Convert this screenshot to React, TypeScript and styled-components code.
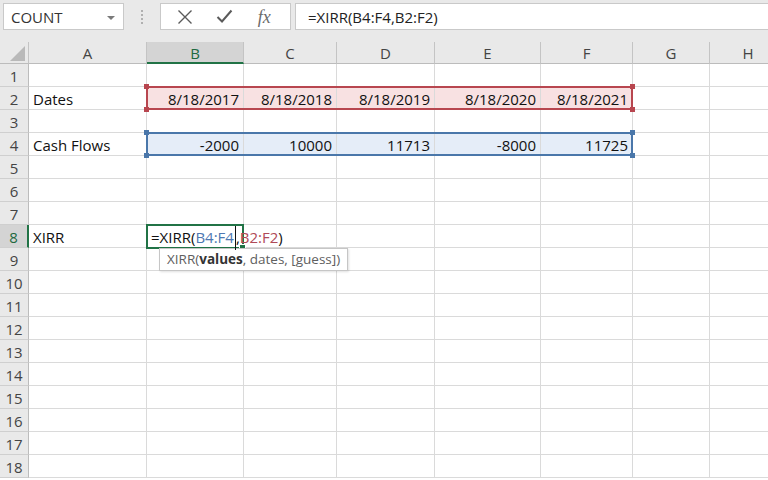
import React from 'react';
import styled, { createGlobalStyle, css } from 'styled-components';

const GlobalStyle = createGlobalStyle`
  html, body { margin: 0; padding: 0; background: #ffffff; }
  body { font-family: 'Open Sans', 'Noto Sans', sans-serif; overflow: hidden; }
`;

const GREEN = '#217346';
const RED = '#b8464f';
const BLUE = '#4a77aa';
const RED_FILL = '#f8e1e2';
const BLUE_FILL = '#e5edf8';

const Page = styled.div`
  width: 768px;
  height: 480px;
  overflow: hidden;
  background: #ffffff;
  display: flex;
  flex-direction: column;
`;

const Toolbar = styled.div`
  height: 42px;
  flex: none;
  background: #e9e9e9;
  display: flex;
  align-items: flex-start;
  padding: 3px 0 0 3px;
  box-sizing: border-box;
`;

const Box = styled.div`
  height: 27px;
  box-sizing: border-box;
  background: #ffffff;
  border: 1px solid #c9c9c9;
  display: flex;
  align-items: center;
`;

const NameBox = styled(Box)`
  width: 121px;
  justify-content: space-between;
  padding: 0 8px 0 7px;
  font-size: 15px;
  color: #333333;
`;

const DropArrow = styled.span`
  width: 0;
  height: 0;
  border-left: 4px solid transparent;
  border-right: 4px solid transparent;
  border-top: 4px solid #7a7a7a;
  margin-top: 2px;
`;

const Grip = styled.div`
  margin: 7px 17px 0 17px;
  display: flex;
  flex-direction: column;
  gap: 2px;
`;

const GripDot = styled.span`
  width: 2px;
  height: 2px;
  background: #b0b0b0;
`;

const ButtonsBox = styled(Box)`
  width: 131px;
  justify-content: space-around;
  padding: 0 6px 0 4px;
`;

const IconSlot = styled.span`
  width: 28px;
  display: flex;
  justify-content: center;
  align-items: center;
`;

const Fx = styled.span`
  font-family: 'Liberation Serif', 'DejaVu Serif', serif;
  font-style: italic;
  font-size: 18px;
  color: #6b6b6b;
  line-height: 1;
`;

const FormulaInput = styled(Box)`
  flex: 1;
  margin-left: 4px;
  padding: 1px 0 0 12px;
  font-size: 15px;
  color: #222222;
  border-right: none;
`;

const Sheet = styled.div`
  display: grid;
  grid-template-columns: 29px 118px 97px 93px 98px 106px 92px 77px 77px;
  grid-template-rows: 22px repeat(18, 23px);
  width: 787px;
`;

const ColHeader = styled.div<{ $selected?: boolean }>`
  box-sizing: border-box;
  background: ${(p) => (p.$selected ? '#d4d4d4' : '#e9e9e9')};
  border-right: 1px solid #c4c4c4;
  border-bottom: ${(p) => (p.$selected ? `2px solid ${GREEN}` : '1px solid #bcbcbc')};
  display: flex;
  align-items: center;
  justify-content: center;
  font-size: 15px;
  color: ${(p) => (p.$selected ? '#1f6a40' : '#444444')};
  padding-top: ${(p) => (p.$selected ? '1px' : '0')};
`;

const Corner = styled.div`
  box-sizing: border-box;
  background: #e9e9e9;
  border-right: 1px solid #c4c4c4;
  border-bottom: 1px solid #bcbcbc;
  display: flex;
  align-items: flex-end;
  justify-content: flex-end;
  padding: 0 3px 2px 0;
`;

const CornerTriangle = styled.span`
  width: 0;
  height: 0;
  border-left: 15px solid transparent;
  border-bottom: 15px solid #b9b9b9;
`;

const RowHeader = styled.div<{ $selected?: boolean }>`
  box-sizing: border-box;
  background: ${(p) => (p.$selected ? '#d4d4d4' : '#e9e9e9')};
  border-right: ${(p) => (p.$selected ? `2px solid ${GREEN}` : '1px solid #bcbcbc')};
  border-bottom: 1px solid #cfcfcf;
  display: flex;
  align-items: flex-end;
  justify-content: center;
  font-size: 15px;
  line-height: 19px;
  color: ${(p) => (p.$selected ? '#1f6a40' : '#444444')};
`;

type RangeColor = 'red' | 'blue';

const Cell = styled.div<{
  $right?: boolean;
  $range?: RangeColor;
  $first?: boolean;
  $last?: boolean;
}>`
  position: relative;
  box-sizing: border-box;
  border-right: 1px solid #dadada;
  border-bottom: 1px solid #dadada;
  display: flex;
  align-items: flex-end;
  justify-content: ${(p) => (p.$right ? 'flex-end' : 'flex-start')};
  padding: 0 4px;
  font-size: 15px;
  line-height: 19px;
  color: #111111;
  white-space: nowrap;
  background: ${(p) =>
    p.$range === 'red' ? RED_FILL : p.$range === 'blue' ? BLUE_FILL : 'transparent'};
  ${(p) =>
    p.$range &&
    css`
      &::before {
        content: '';
        position: absolute;
        top: -1px;
        bottom: -1px;
        left: ${p.$first ? '-1px' : '0'};
        right: -1px;
        border-top: 2px solid ${p.$range === 'red' ? RED : BLUE};
        border-bottom: 2px solid ${p.$range === 'red' ? RED : BLUE};
        border-left: ${p.$first ? `2px solid ${p.$range === 'red' ? RED : BLUE}` : 'none'};
        border-right: ${p.$last ? `2px solid ${p.$range === 'red' ? RED : BLUE}` : 'none'};
        pointer-events: none;
      }
    `}
`;

const Handle = styled.span<{ $color: string; $top?: boolean; $left?: boolean }>`
  position: absolute;
  width: 5px;
  height: 5px;
  background: ${(p) => p.$color};
  ${(p) => (p.$top ? 'top: -3px;' : 'bottom: -3px;')}
  ${(p) => (p.$left ? 'left: -3px;' : 'right: -3px;')}
  z-index: 2;
`;

const CellText = styled.span`
  position: relative;
  z-index: 1;
`;

const EditCell = styled.div`
  position: relative;
  box-sizing: border-box;
  border: 2px solid ${GREEN};
  margin: -1px 0 -1px -1px;
  display: flex;
  align-items: flex-end;
  padding: 0 3px 0 3px;
  font-size: 15px;
  line-height: 19px;
  color: #111111;
  white-space: nowrap;
  overflow: visible;
  z-index: 3;
`;

const Ref = styled.span<{ $color: string }>`
  color: ${(p) => p.$color};
`;

const Caret = styled.span`
  position: relative;
  display: inline-block;
  width: 1px;
  height: 0;
  margin-left: 1px;
  &::after {
    content: '';
    position: absolute;
    left: 0;
    top: -17px;
    width: 1px;
    height: 24px;
    background: #111111;
  }
`;

const FillHandle = styled.span`
  position: absolute;
  right: -4px;
  bottom: -4px;
  width: 5px;
  height: 5px;
  background: ${GREEN};
  border: 1px solid #ffffff;
`;

const Tooltip = styled.div`
  position: absolute;
  top: calc(100% + 1px);
  left: 11px;
  box-sizing: border-box;
  height: 23px;
  padding: 0 7px;
  display: flex;
  align-items: center;
  background: #ffffff;
  border: 1px solid #c6c6c6;
  box-shadow: 1px 1px 2px rgba(0, 0, 0, 0.12);
  font-size: 13.5px;
  color: #606060;
  white-space: nowrap;
`;

const Bold = styled.b`
  color: #333333;
  font-weight: 700;
`;

const CloseIcon = () => (
  <svg width="16" height="16" viewBox="0 0 16 16">
    <path d="M1.5 1.5 L14.5 14.5 M14.5 1.5 L1.5 14.5" stroke="#5a5a5a" strokeWidth="1.4" fill="none" />
  </svg>
);

const CheckIcon = () => (
  <svg width="17" height="15" viewBox="0 0 17 15">
    <path d="M1.5 8 L6 12.5 L15.5 1.5" stroke="#5a5a5a" strokeWidth="2" fill="none" />
  </svg>
);

const columns = ['A', 'B', 'C', 'D', 'E', 'F', 'G', 'H'];

type CellData = { text?: string; right?: boolean; range?: RangeColor };

const dates = ['8/18/2017', '8/18/2018', '8/18/2019', '8/18/2020', '8/18/2021'];
const flows = ['-2000', '10000', '11713', '-8000', '11725'];

function rowData(r: number): CellData[] {
  const row: CellData[] = columns.map(() => ({}));
  if (r === 2) {
    row[0] = { text: 'Dates' };
    dates.forEach((d, i) => (row[i + 1] = { text: d, right: true, range: 'red' }));
  }
  if (r === 4) {
    row[0] = { text: 'Cash Flows' };
    flows.forEach((d, i) => (row[i + 1] = { text: d, right: true, range: 'blue' }));
  }
  if (r === 8) {
    row[0] = { text: 'XIRR' };
  }
  return row;
}

export default function App() {
  const rows = Array.from({ length: 18 }, (_, i) => i + 1);
  return (
    <Page>
      <GlobalStyle />
      <Toolbar>
        <NameBox>
          <span>COUNT</span>
          <DropArrow />
        </NameBox>
        <Grip>
          <GripDot />
          <GripDot />
          <GripDot />
          <GripDot />
        </Grip>
        <ButtonsBox>
          <IconSlot>
            <CloseIcon />
          </IconSlot>
          <IconSlot>
            <CheckIcon />
          </IconSlot>
          <IconSlot>
            <Fx>fx</Fx>
          </IconSlot>
        </ButtonsBox>
        <FormulaInput>=XIRR(B4:F4,B2:F2)</FormulaInput>
      </Toolbar>
      <Sheet>
        <Corner>
          <CornerTriangle />
        </Corner>
        {columns.map((c) => (
          <ColHeader key={c} $selected={c === 'B'}>
            {c}
          </ColHeader>
        ))}
        {rows.map((r) => (
          <React.Fragment key={r}>
            <RowHeader $selected={r === 8}>{r}</RowHeader>
            {rowData(r).map((cell, ci) => {
              if (r === 8 && ci === 1) {
                return (
                  <EditCell key={ci}>
                    <CellText>
                      =XIRR(<Ref $color="#4e78b2">B4:F4</Ref>
                      <Caret />,<Ref $color="#b04a58">B2:F2</Ref>)
                    </CellText>
                    <FillHandle />
                    <Tooltip>
                      XIRR(<Bold>values</Bold>, dates, [guess])
                    </Tooltip>
                  </EditCell>
                );
              }
              const first = !!cell.range && ci === 1;
              const last = !!cell.range && ci === 5;
              const color = cell.range === 'red' ? RED : BLUE;
              return (
                <Cell
                  key={ci}
                  $right={cell.right}
                  $range={cell.range}
                  $first={first}
                  $last={last}
                >
                  {first && (
                    <>
                      <Handle $color={color} $top $left />
                      <Handle $color={color} $left />
                    </>
                  )}
                  {last && (
                    <>
                      <Handle $color={color} $top />
                      <Handle $color={color} />
                    </>
                  )}
                  {cell.text && <CellText>{cell.text}</CellText>}
                </Cell>
              );
            })}
          </React.Fragment>
        ))}
      </Sheet>
    </Page>
  );
}
